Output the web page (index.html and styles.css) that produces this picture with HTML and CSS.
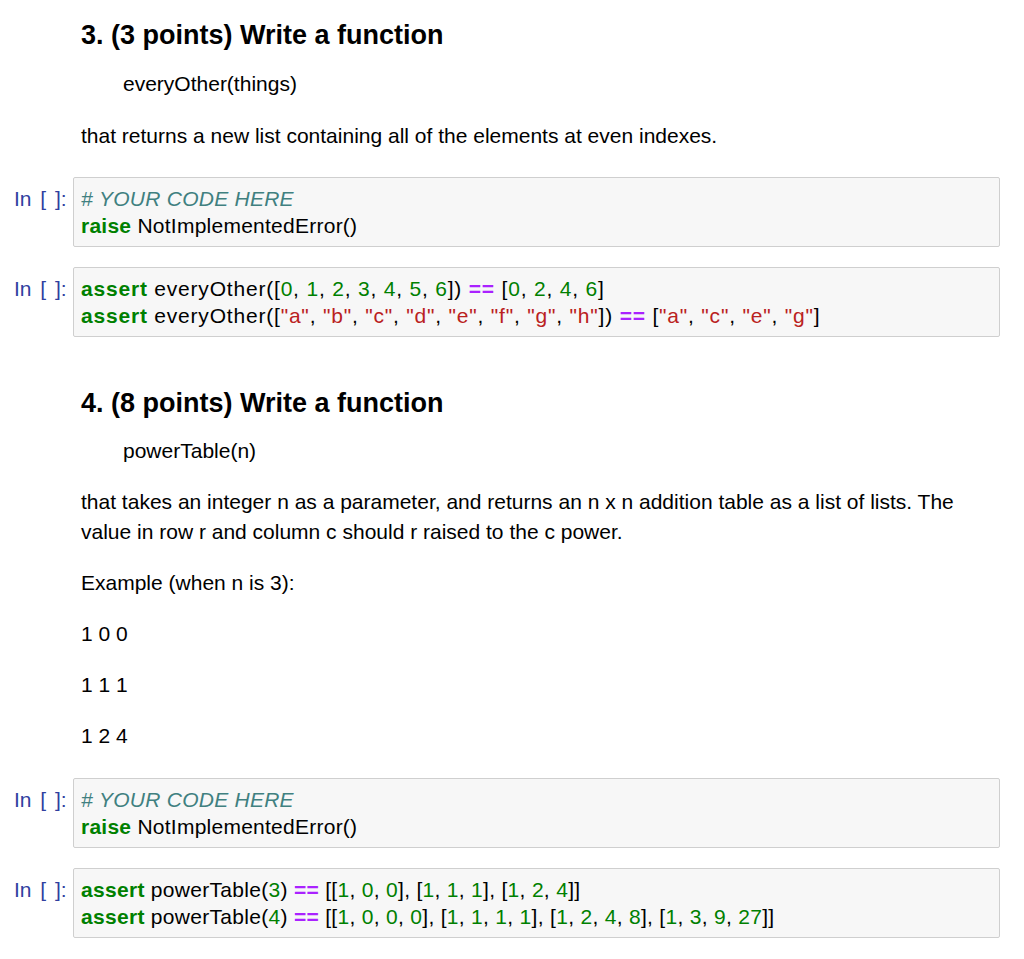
FILE: index.html
```html
<!DOCTYPE html>
<html>
<head>
<meta charset="utf-8">
<link rel="stylesheet" href="styles.css">
</head>
<body>
<div class="nb">
  <div class="md">
    <h3 class="h">3. (3 points) Write a function</h3>
    <div class="sig">everyOther(things)</div>
    <p class="p first">that returns a new list containing all of the elements at even indexes.</p>
  </div>
  <div class="cell">
    <div class="prompt">In [ ]:</div>
    <div class="input"><span class="c">#&nbsp;YOUR CODE HERE</span>
<span class="k">raise</span> NotImplementedError()</div>
  </div>
  <div class="cell">
    <div class="prompt">In [ ]:</div>
    <div class="input wide"><span class="k">assert</span> everyOther([<span class="n">0</span>, <span class="n">1</span>, <span class="n">2</span>, <span class="n">3</span>, <span class="n">4</span>, <span class="n">5</span>, <span class="n">6</span>]) <span class="o">==</span> [<span class="n">0</span>, <span class="n">2</span>, <span class="n">4</span>, <span class="n">6</span>]
<span class="k">assert</span> everyOther([<span class="s">"a"</span>, <span class="s">"b"</span>, <span class="s">"c"</span>, <span class="s">"d"</span>, <span class="s">"e"</span>, <span class="s">"f"</span>, <span class="s">"g"</span>, <span class="s">"h"</span>]) <span class="o">==</span> [<span class="s">"a"</span>, <span class="s">"c"</span>, <span class="s">"e"</span>, <span class="s">"g"</span>]</div>
  </div>
  <div class="md md2">
    <h3 class="h">4. (8 points) Write a function</h3>
    <div class="sig">powerTable(n)</div>
    <p class="p">that takes an integer n as a parameter, and returns an n x n addition table as a list of lists. The value in row r and column c should r raised to the c power.</p>
    <p class="p">Example (when n is 3):</p>
    <p class="p">1 0 0</p>
    <p class="p">1 1 1</p>
    <p class="p">1 2 4</p>
  </div>
  <div class="cell">
    <div class="prompt">In [ ]:</div>
    <div class="input"><span class="c">#&nbsp;YOUR CODE HERE</span>
<span class="k">raise</span> NotImplementedError()</div>
  </div>
  <div class="cell">
    <div class="prompt">In [ ]:</div>
    <div class="input mid"><span class="k">assert</span> powerTable(<span class="n">3</span>) <span class="o">==</span> [[<span class="n">1</span>, <span class="n">0</span>, <span class="n">0</span>], [<span class="n">1</span>, <span class="n">1</span>, <span class="n">1</span>], [<span class="n">1</span>, <span class="n">2</span>, <span class="n">4</span>]]
<span class="k">assert</span> powerTable(<span class="n">4</span>) <span class="o">==</span> [[<span class="n">1</span>, <span class="n">0</span>, <span class="n">0</span>, <span class="n">0</span>], [<span class="n">1</span>, <span class="n">1</span>, <span class="n">1</span>, <span class="n">1</span>], [<span class="n">1</span>, <span class="n">2</span>, <span class="n">4</span>, <span class="n">8</span>], [<span class="n">1</span>, <span class="n">3</span>, <span class="n">9</span>, <span class="n">27</span>]]</div>
  </div>
</div>
</body>
</html>
```

FILE: styles.css
```css
html, body {
  margin: 0;
  padding: 0;
  background: #ffffff;
}
body {
  font-family: "Liberation Sans", Arial, sans-serif;
  color: #000;
}
.nb {
  width: 1024px;
  padding-top: 18px;
}
.md {
  padding-left: 81px;
  padding-right: 20px;
}
.md2 {
  margin-top: 49px;
}
.h {
  font-size: 27px;
  font-weight: bold;
  margin: 0;
  line-height: 34px;
  color: #000;
}
.sig {
  font-size: 21px;
  margin: 17px 0 0 42px;
  line-height: 30px;
}
.md2 .sig { margin-top: 16px; }
.p {
  font-size: 21px;
  line-height: 30px;
  margin: 21px 0 0 0;
}
.p.first { margin-top: 22px; }
.cell {
  display: grid;
  grid-template-columns: 73px 927px;
  margin-top: 20px;
}
.md + .cell { margin-top: 26px; }
.md2 + .cell { margin-top: 27px; }
.prompt {
  color: #303F9F;
  font-size: 21px;
  padding-left: 14px;
  padding-top: 8px;
  line-height: 27px;
  white-space: nowrap;
  word-spacing: 3px;
}
.input {
  background: #f7f7f7;
  border: 1px solid #cfcfcf;
  border-radius: 2px;
  padding: 7px 7px 7px 7px;
  font-size: 21px;
  line-height: 27px;
  white-space: pre;
  color: #000;
  letter-spacing: 0.25px;
}
.input.wide { letter-spacing: 0.8px; }
.input.mid { letter-spacing: 0.3px; }
.k { color: #008000; font-weight: bold; }
.c { color: #408080; font-style: italic; }
.n { color: #008000; }
.s { color: #BA2121; }
.o { color: #AA22FF; font-weight: bold; }
```
